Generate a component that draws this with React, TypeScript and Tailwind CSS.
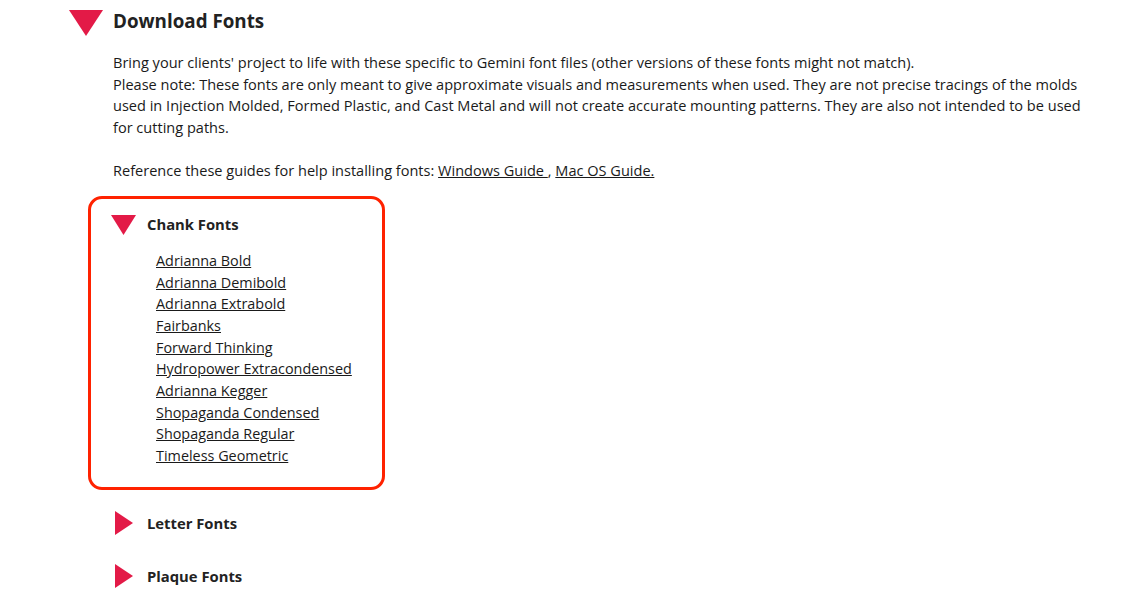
import React from 'react'

const CHANK_FONTS = [
  'Adrianna Bold',
  'Adrianna Demibold',
  'Adrianna Extrabold',
  'Fairbanks',
  'Forward Thinking',
  'Hydropower Extracondensed',
  'Adrianna Kegger',
  'Shopaganda Condensed',
  'Shopaganda Regular',
  'Timeless Geometric'
]

const DownTriangle = ({ w, h }: { w: number; h: number }) => (
  <svg width={w} height={h} viewBox={`0 0 ${w} ${h}`} className="shrink-0">
    <polygon points={`0,0 ${w},0 ${w / 2},${h}`} fill="#e31a47" />
  </svg>
)

const RightTriangle = ({ w, h }: { w: number; h: number }) => (
  <svg width={w} height={h} viewBox={`0 0 ${w} ${h}`} className="shrink-0">
    <polygon points={`0,0 ${w},${h / 2} 0,${h}`} fill="#e31a47" />
  </svg>
)

const App: React.FC = () => {
  return (
    <div
      className="min-h-[602px] bg-white text-[#1a1a1a] pl-[69px] pt-[10px]"
      style={{ fontFamily: '"Open Sans", "Noto Sans", sans-serif' }}
    >
      {/* heading */}
      <div className="flex items-start">
        <DownTriangle w={34} h={26} />
        <h2 className="ml-[10px] -mt-[1px] text-[18.8px] leading-[24px] font-bold text-[#222]">
          Download Fonts
        </h2>
      </div>

      {/* intro */}
      <div className="pl-[44px] pt-[16px] text-[14.55px] leading-[21.5px]">
        <p>
          Bring your clients' project to life with these specific to Gemini font files (other versions of
          these fonts might not match).
          <br />
          Please note: These fonts are only meant to give approximate visuals and measurements when used. They are
          not precise tracings of the molds
          <br />
          used in Injection Molded, Formed Plastic, and Cast Metal and will not create accurate mounting patterns.
          They are also not intended to be used
          <br />
          for cutting paths.
        </p>
        <p className="mt-[21.5px]">
          Reference these guides for help installing fonts:{' '}
          <a href="#" className="underline">
            Windows Guide{' '}
          </a>
          ,{' '}
          <a href="#" className="underline">
            Mac OS Guide.
          </a>
        </p>
      </div>

      {/* chank fonts */}
      <div className="ml-[19px] mt-[15px] w-[297px] border-[3px] border-[#ff2200] rounded-[14px] pl-[20px] pt-[16px] pb-[20px]">
        <div className="flex items-start">
          <DownTriangle w={25} h={20} />
          <span className="ml-[11px] -mt-[1px] text-[14.8px] leading-[20px] font-bold text-[#222]">
            Chank Fonts
          </span>
        </div>
        <ul className="pl-[45px] pt-[15px] text-[14.4px] leading-[21.67px]">
          {CHANK_FONTS.map((name) => (
            <li key={name}>
              <a href="#" className="underline">
                {name}
              </a>
            </li>
          ))}
        </ul>
      </div>

      {/* collapsed groups */}
      <div className="pl-[46px] pt-[21px] flex flex-col gap-[29px]">
        {['Letter Fonts', 'Plaque Fonts'].map((label) => (
          <div key={label} className="flex items-center">
            <RightTriangle w={18} h={24} />
            <span className="ml-[14px] text-[14.8px] font-bold text-[#222]">{label}</span>
          </div>
        ))}
      </div>
    </div>
  )
}

export default App
